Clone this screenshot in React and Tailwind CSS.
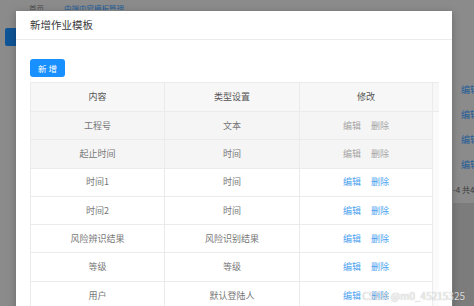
const rows = [
  { name: "工程号", type: "文本", locked: true },
  { name: "起止时间", type: "时间", locked: true },
  { name: "时间1", type: "时间" },
  { name: "时间2", type: "时间" },
  { name: "风险辨识结果", type: "风险识别结果" },
  { name: "等级", type: "等级" },
  { name: "用户", type: "默认登陆人" },
];

const TemplateRow = ({ row }) => {
  const bg = row.locked ? "bg-[#f5f5f5]" : "bg-white";
  const link = row.locked ? "text-[#a5a5a5]" : "text-[#4a9ff0]";
  return (
    <div className="grid h-[28.3px] grid-cols-[134px_135px_134px_6px]">
      <div className={`flex items-center justify-center border-b border-l border-[#ebebeb] ${bg}`}>{row.name}</div>
      <div className={`flex items-center justify-center border-b border-l border-[#ebebeb] ${bg}`}>{row.type}</div>
      <div className={`flex items-center justify-center gap-[10px] border-b border-l border-r border-[#ebebeb] ${bg} ${link}`}>
        <span>编辑</span>
        <span>删除</span>
      </div>
      <div className="bg-[#fbfbfb]" />
    </div>
  );
};

export default function App() {
  return (
    <div className="relative h-[306px] w-[474px] overflow-hidden bg-[#8b8b8b] font-['Noto_Sans_CJK_SC',sans-serif]">
      {/* page behind the mask */}
      <div className="flex h-[10px] items-end gap-[20px] overflow-hidden pl-[29px] text-[7.5px] leading-[10px]">
        <span className="translate-y-[4px] text-[#4a4a4a]">首页</span>
        <span className="translate-y-[4px] text-[#1d5c99]">中端内容模板管理</span>
      </div>
      <div className="ml-[5px] mt-[18px] h-[18px] w-[20px] rounded-[2px] bg-[#0f5496]" />
      <div className="absolute right-0 top-0 flex h-full w-[21px] flex-col">
        <div className="flex flex-col gap-[13px] whitespace-nowrap pl-[8px] pt-[84px] text-[9px] leading-[12px] text-[#1d5c99]">
          <span>编辑</span>
          <span>编辑</span>
          <span>编辑</span>
          <span>编辑</span>
        </div>
        <div className="mt-[14px] whitespace-nowrap text-[8px] leading-[10px] text-[#3a3a3a]">-4 共4</div>
        <div className="mt-[8px] flex-1 bg-[#7c7c7c]" />
      </div>

      {/* modal */}
      <div className="absolute left-[16px] top-[11px] flex h-[320px] w-[436px] flex-col bg-white shadow-[0_2px_8px_rgba(0,0,0,0.25)]">
        <div className="flex h-[29px] items-center border-b border-[#ececec] px-[14px] text-[10.5px] text-[#3a3a3a]">
          新增作业模板
        </div>
        <div className="flex flex-col items-start px-[14px] pt-[19px]">
          <button className="flex h-[18px] w-[35px] items-center justify-center rounded-[3px] bg-[#1890ff] text-[8.5px] text-white">
            新&nbsp;增
          </button>
          <div className="mt-[5px] flex flex-col text-[9px] text-[#777]">
            <div className="grid h-[30px] grid-cols-[134px_135px_134px_6px] bg-[#f7f7f7] text-[#555]">
              <div className="flex items-center justify-center border-b border-l border-t border-[#ebebeb]">内容</div>
              <div className="flex items-center justify-center border-b border-l border-t border-[#ebebeb]">类型设置</div>
              <div className="flex items-center justify-center border-b border-l border-r border-t border-[#ebebeb]">修改</div>
              <div className="border-b border-t border-[#ebebeb]" />
            </div>
            {rows.map((row) => (
              <TemplateRow key={row.name} row={row} />
            ))}
          </div>
        </div>
      </div>

      <div className="absolute bottom-[4px] right-[9px] text-[10px] leading-[12px] text-white/80 [text-shadow:0_0_1px_rgba(0,0,0,0.4)]">
        CSDN @m0_45215325
      </div>
    </div>
  );
}
